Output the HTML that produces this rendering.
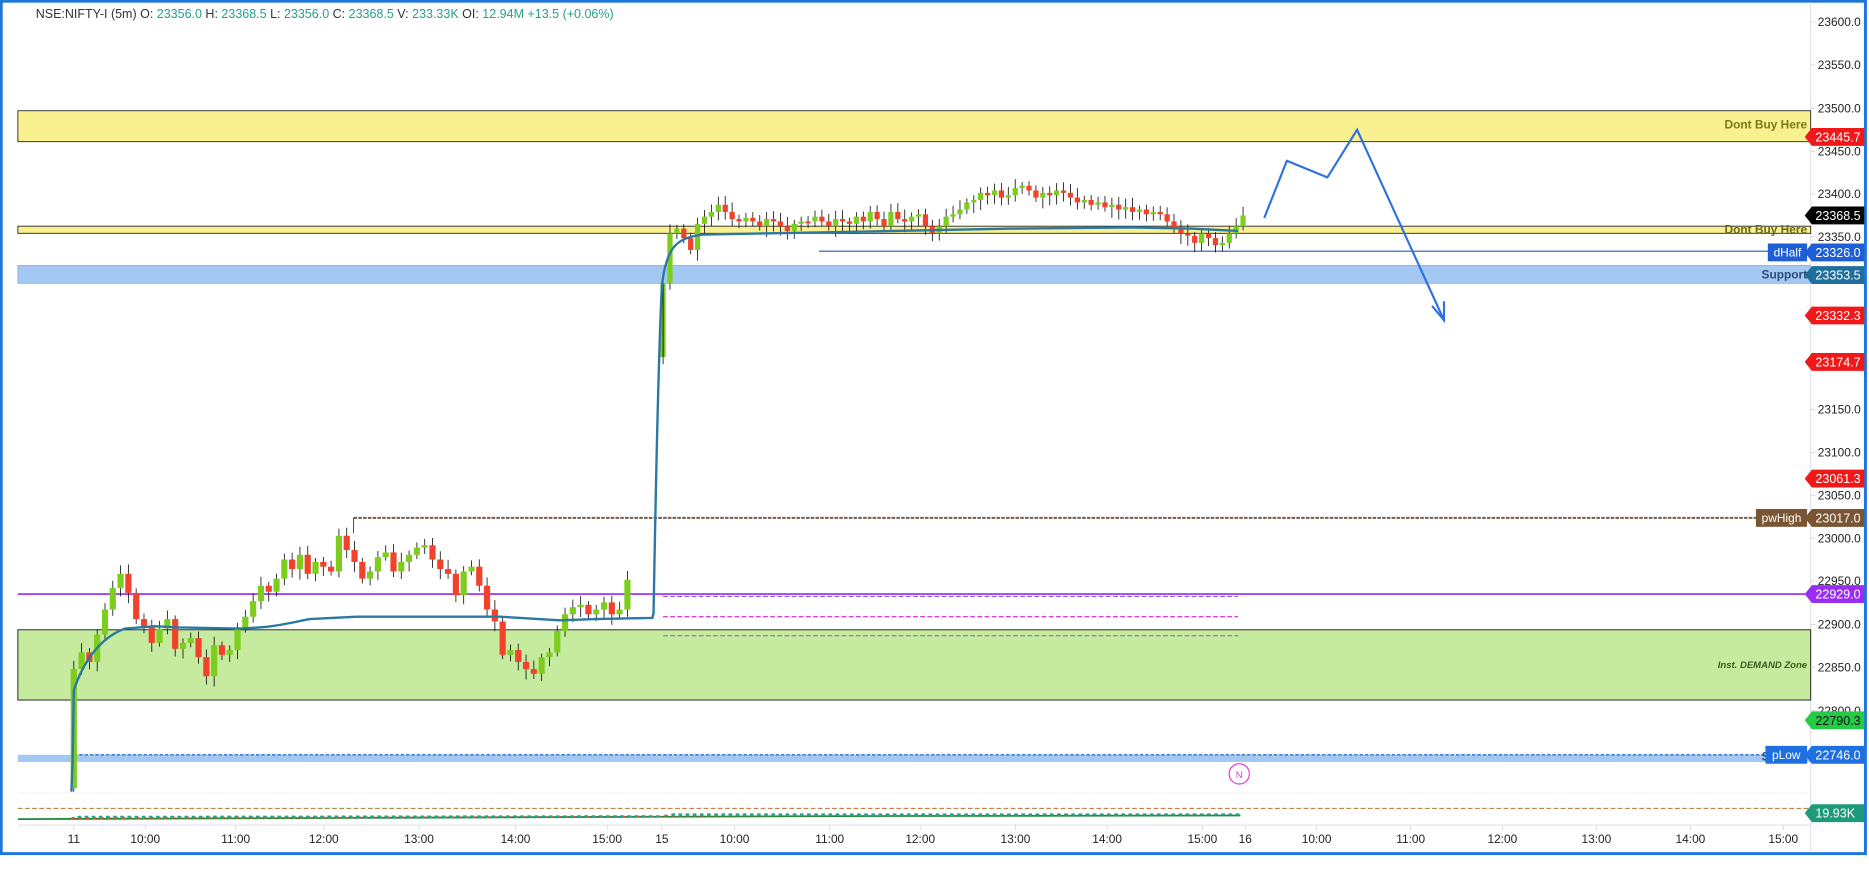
<!DOCTYPE html>
<html><head><meta charset="utf-8"><style>
html,body{margin:0;padding:0;background:#fff;width:1869px;height:881px;overflow:hidden}
svg{display:block}
text{font-family:"Liberation Sans",sans-serif}
</style></head><body>
<svg id="s" width="1869" height="881" viewBox="0 0 1570 740" preserveAspectRatio="none" xmlns="http://www.w3.org/2000/svg">
<rect x="0" y="0" width="1570" height="740" fill="#fff"/>
<rect x="1" y="1" width="1566" height="716" fill="none" stroke="#1e77d8" stroke-width="2.5"/>
<line x1="1521" y1="2" x2="1521" y2="716" stroke="#e0e3eb" stroke-width="1"/>
<line x1="15" y1="693" x2="1521" y2="693" stroke="#e0e3eb" stroke-width="1"/>
<line x1="15" y1="666" x2="1521" y2="666" stroke="#f0f0f0" stroke-width="0.8"/>

<rect x="15" y="93" width="1506" height="26" fill="#f9f08f" stroke="#333" stroke-width="0.8"/>
<rect x="15" y="190" width="1506" height="6" fill="#f9f08f" stroke="#333" stroke-width="0.8"/>
<rect x="15" y="223" width="1506" height="15" fill="#a3c8f1" stroke="#7fa9dc" stroke-width="0.6"/>
<rect x="15" y="529" width="1506" height="59" fill="#c6eb9e" stroke="#222" stroke-width="0.8"/>
<rect x="15" y="634" width="1506" height="6" fill="#a3c8f1"/>
<line x1="62" y1="634" x2="1521" y2="634" stroke="#2c6fd6" stroke-width="1.2" stroke-dasharray="3,1.5"/>
<line x1="688" y1="211" x2="1521" y2="211" stroke="#2a58b0" stroke-width="1"/>
<line x1="297" y1="435" x2="1521" y2="435" stroke="#7a5c45" stroke-width="1.6" stroke-dasharray="3,1"/>
<line x1="297" y1="435" x2="297" y2="448" stroke="#444" stroke-width="0.8"/>
<line x1="15" y1="499" x2="1521" y2="499" stroke="#a344f0" stroke-width="1.6"/>
<line x1="557" y1="501" x2="1040" y2="501" stroke="#8a58e8" stroke-width="1" stroke-dasharray="4,2"/>
<line x1="557" y1="518" x2="1040" y2="518" stroke="#e43be0" stroke-width="1.2" stroke-dasharray="4,2"/>
<line x1="557" y1="534" x2="1040" y2="534" stroke="#7a8aa5" stroke-width="1" stroke-dasharray="4,2"/>
<line x1="15" y1="679" x2="1521" y2="679" stroke="#b5742f" stroke-width="0.8" stroke-dasharray="4,2"/>

<text x="1518" y="108" font-size="10" font-weight="bold" fill="#7a7a1a" text-anchor="end" font-family="DejaVu Sans,sans-serif">Dont Buy Here</text>
<text x="1518" y="196" font-size="10" font-weight="bold" fill="#6a6a20" text-anchor="end" font-family="DejaVu Sans,sans-serif">Dont Buy Here</text>
<text x="1518" y="234" font-size="10" font-weight="bold" fill="#2b4d7a" text-anchor="end" font-family="DejaVu Sans,sans-serif">Support</text>
<text x="1518" y="561" font-size="8" font-weight="bold" font-style="italic" fill="#3d5a1a" text-anchor="end" font-family="DejaVu Sans,sans-serif">Inst. DEMAND Zone</text>
<text x="1518" y="639" font-size="10" font-weight="bold" fill="#2b4d7a" text-anchor="end" font-family="DejaVu Sans,sans-serif">Support</text>

<g id="candles"></g>
<path id="vwap" fill="none" stroke="#2b78a3" stroke-width="2"/>

<path d="M15 688 L300 687 L556 686 L700 685.5 L1042 685" stroke="#1f8a3a" stroke-width="1.5" fill="none"/>
<path d="M60 687 L556 686 M558 685 L1042 684" stroke="#e45a3a" stroke-width="1.5" stroke-dasharray="3,3" fill="none"/>
<path d="M62 686 L556 685.5 M561 684 L1042 684" stroke="#21a08a" stroke-width="1.5" stroke-dasharray="3,3" stroke-dashoffset="3" fill="none"/>

<polyline points="1062,183 1081,135 1115,149 1140,109 1213,269" fill="none" stroke="#2f6fe0" stroke-width="1.8" stroke-linejoin="miter"/>
<polyline points="1203,257 1213,269 1213,253" fill="none" stroke="#2f6fe0" stroke-width="1.8"/>

<circle cx="1041" cy="650" r="8.5" fill="#fff" stroke="#e040d8" stroke-width="1"/>
<text x="1041" y="653.5" font-size="8" fill="#e040d8" text-anchor="middle">N</text>

<text x="30" y="15" font-size="10.5" fill="#333">NSE:NIFTY-I (5m)  O: <tspan fill="#26a08a">23356.0</tspan> H: <tspan fill="#26a08a">23368.5</tspan> L: <tspan fill="#26a08a">23356.0</tspan> C: <tspan fill="#26a08a">23368.5</tspan> V: <tspan fill="#26a08a">233.33K</tspan> OI: <tspan fill="#26a08a">12.94M</tspan>  <tspan fill="#26a08a">+13.5  (+0.06%)</tspan></text>

<g id="axis" font-size="10" fill="#222"></g>
<g id="tags"></g>
</svg>
<script>
var NS="http://www.w3.org/2000/svg";
function el(t,a,p,txt){var e=document.createElementNS(NS,t);for(var k in a)e.setAttribute(k,a[k]);if(txt!=null)e.textContent=txt;(p||document.getElementById('s')).appendChild(e);return e;}
var ax=document.getElementById('axis');
[[23600,18.5],[23550,54.6],[23500,90.8],[23450,127],[23400,163],[23350,199],[23150,344],[23100,380],[23050,416],[23000,452],[22950,488],[22900,524.5],[22850,560.5],[22800,597]].forEach(function(p){
 el('line',{x1:1521,y1:p[1],x2:1525,y2:p[1],stroke:'#ccc','stroke-width':0.6},ax);
 el('text',{x:1527,y:p[1]+3.5},ax,p[0].toFixed(1));});
[["11",62],["10:00",122],["11:00",198],["12:00",272],["13:00",352],["14:00",433],["15:00",510],["15",556],["10:00",617],["11:00",697],["12:00",773],["13:00",853],["14:00",930],["15:00",1010],["16",1046],["10:00",1106],["11:00",1185],["12:00",1262],["13:00",1341],["14:00",1420],["15:00",1498]].forEach(function(t){
 el('line',{x1:t[1],y1:693,x2:t[1],y2:697,stroke:'#ccc','stroke-width':0.6},ax);
 el('text',{x:t[1],y:708,'text-anchor':'middle'},ax,t[0]);});
var tg=document.getElementById('tags');
function tag(y,txt,bg,fg){el('path',{d:'M1516 '+y+' L1522 '+(y-7.5)+' L1566 '+(y-7.5)+' L1566 '+(y+7.5)+' L1522 '+(y+7.5)+' Z',fill:bg},tg);
 el('text',{x:1525,y:y+3.8,'font-size':10.5,fill:fg||'#fff'},tg,txt);}
tag(115,'23445.7','#f01818');tag(181,'23368.5','#000');tag(212,'23326.0','#1f5fd6');tag(231,'23353.5','#1e6e9e');
tag(265,'23332.3','#f01818');tag(304,'23174.7','#f01818');tag(402,'23061.3','#f01818');tag(435,'23017.0','#7a5533');
tag(499,'22929.0','#9a2ef0');tag(605,'22790.3','#22cc44','#111');tag(634,'22746.0','#1e6fe0');tag(683,'19.93K','#1e9a7a');
function box(x,y,w,txt,bg){el('rect',{x:x,y:y-7.5,width:w,height:15,fill:bg},tg);el('text',{x:x+w/2,y:y+3.5,'font-size':10,fill:'#fff','text-anchor':'middle'},tg,txt);}
box(1485,212,33,'dHalf','#1f5fd6');box(1475,435,43,'pwHigh','#7a5533');box(1483,634,35,'pLow','#1e6fe0');
var cg=document.getElementById('candles');
var d1=[562,548,556,533,512,494,482,498,520,526,540,528,520,545,540,536,552,568,542,550,546,528,518,505,492,497,486,470,478,466,482,472,476,480,450,462,472,486,480,468,464,480,472,466,460,458,470,478,482,500,480,476,492,512,522,550,546,556,562,566,552,548,530,516,510,508,516,512,506,516,512,487];
var x=62;
function candle(x,o,c,w){var g=c<o;var col=g?'#7ccd1e':'#f2422c';var hi=Math.min(o,c)-3-((x*7)%5),lo=Math.max(o,c)+3+((x*3)%6);
 el('line',{x1:x,y1:hi,x2:x,y2:lo,stroke:'#111','stroke-width':0.7},cg);
 var h=Math.abs(c-o);if(h<1.5)h=1.5;el('rect',{x:x-w/2,y:Math.min(o,c),width:w,height:h,fill:col},cg);}
for(var i=0;i<d1.length;i++){var o=(i==0?662:d1[i-1]);candle(x,o,d1[i],5.2);x+=6.55;}
var d2=[238,196,192,200,210,188,182,178,172,178,184,186,183,186,190,184,186,190,194,188,186,186,182,186,190,184,186,188,182,186,178,184,190,178,184,186,182,180,190,196,190,182,180,176,170,168,162,164,160,166,164,158,156,160,166,162,164,160,162,166,170,168,172,170,174,172,176,174,178,176,180,178,180,186,192,196,198,204,196,200,206,204,196,190,181];
x=557;
for(var i=0;i<d2.length;i++){var o=(i==0?300:d2[i-1]);candle(x,o,d2[i],4.4);x+=5.8;}
el('line',{x1:557,y1:236,x2:557,y2:300,stroke:'#111','stroke-width':0.8},cg);
document.getElementById('vwap').setAttribute('d','M60 665 L61 640 L62 580 C70 555 85 535 105 528 L130 526 L150 527 L200 528 C230 527 240 524 260 520 L300 518 L360 518 L420 518 L470 521 L500 520 L548 519 L549 515 C551 400 553 300 556 240 C560 205 570 200 590 197 L700 195 L850 192 L950 191 L1000 192 L1040 194');
</script>
</body></html>
